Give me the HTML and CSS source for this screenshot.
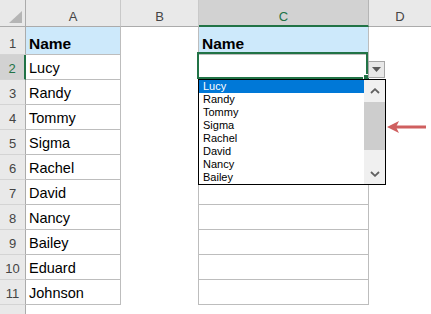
FILE: index.html
```html
<!DOCTYPE html>
<html lang="en">
<head>
    <meta charset="UTF-8">
    <title>Name list - data validation</title>
    <link rel="stylesheet" href="styles.css">
</head>
<body>
    <div class="sheet">
        <!-- column headers -->
        <div class="corner"><span class="corner-tri"></span></div>
        <div class="colhead">A</div>
        <div class="colhead">B</div>
        <div class="colhead sel">C</div>
        <div class="colhead last">D</div>

        <div class="rowhead">1</div>
        <div class="cell a head">Name</div>
        <div class="cell b"></div>
        <div class="cell c head">Name</div>
        <div class="cell d"></div>

        <div class="rowhead sel">2</div>
        <div class="cell a">Lucy</div>
        <div class="cell b"></div>
        <div class="cell c active">
            <div class="selection"><span class="handle"></span></div>
            <div class="drop-btn">
                <svg width="9" height="5" viewBox="0 0 9 5"><path d="M0 0 H9 L4.5 5 Z" fill="#5a5a5a"/></svg>
            </div>
            <div class="listbox">
                <ul class="items">
                    <li class="picked">Lucy</li>
                    <li>Randy</li>
                    <li>Tommy</li>
                    <li>Sigma</li>
                    <li>Rachel</li>
                    <li>David</li>
                    <li>Nancy</li>
                    <li>Bailey</li>
                </ul>
                <div class="scrollbar">
                    <div class="sb-btn up">
                        <svg width="10" height="6" viewBox="0 0 10 6"><polyline points="1,5 5,1.2 9,5" fill="none" stroke="#606060" stroke-width="1.8"/></svg>
                    </div>
                    <div class="sb-thumb"></div>
                    <div class="sb-track"></div>
                    <div class="sb-btn down">
                        <svg width="10" height="6" viewBox="0 0 10 6"><polyline points="1,1 5,4.8 9,1" fill="none" stroke="#606060" stroke-width="1.8"/></svg>
                    </div>
                </div>
            </div>
        </div>
        <div class="cell d"></div>

        <div class="rowhead">3</div>
        <div class="cell a">Randy</div>
        <div class="cell b"></div>
        <div class="cell c"></div>
        <div class="cell d"></div>

        <div class="rowhead">4</div>
        <div class="cell a">Tommy</div>
        <div class="cell b"></div>
        <div class="cell c"></div>
        <div class="cell d"></div>

        <div class="rowhead">5</div>
        <div class="cell a">Sigma</div>
        <div class="cell b"></div>
        <div class="cell c"></div>
        <div class="cell d"></div>

        <div class="rowhead">6</div>
        <div class="cell a">Rachel</div>
        <div class="cell b"></div>
        <div class="cell c"></div>
        <div class="cell d"></div>

        <div class="rowhead">7</div>
        <div class="cell a">David</div>
        <div class="cell b"></div>
        <div class="cell c"></div>
        <div class="cell d"></div>

        <div class="rowhead">8</div>
        <div class="cell a">Nancy</div>
        <div class="cell b"></div>
        <div class="cell c"></div>
        <div class="cell d"></div>

        <div class="rowhead">9</div>
        <div class="cell a">Bailey</div>
        <div class="cell b"></div>
        <div class="cell c"></div>
        <div class="cell d"></div>

        <div class="rowhead">10</div>
        <div class="cell a">Eduard</div>
        <div class="cell b"></div>
        <div class="cell c"></div>
        <div class="cell d"></div>

        <div class="rowhead">11</div>
        <div class="cell a">Johnson</div>
        <div class="cell b"></div>
        <div class="cell c"></div>
        <div class="cell d"></div>

        <div class="rowhead next">12</div>
        <div class="cell empty"></div>
        <div class="cell empty"></div>
        <div class="cell empty"></div>
        <div class="cell empty"></div>

        <!-- pointer arrow -->
        <svg class="pointer" width="44" height="16" viewBox="0 0 44 16">
            <path d="M1 8 L13 2 L10 8 L13 14 Z" fill="#cf5f5f"/>
            <rect x="9" y="6.5" width="31" height="3" fill="#cf5f5f"/>
        </svg>
    </div>
</body>
</html>
```

FILE: styles.css
```css
html, body {
    margin: 0;
    padding: 0;
    background: #fff;
    overflow: hidden;
}
.sheet {
    position: relative;
    display: grid;
    grid-template-columns: 26px 95px 78px 170px 1fr;
    grid-template-rows: 27px 28px repeat(10, 25px) 25px;
    width: 431px;
    height: 314px;
    overflow: hidden;
    font-family: "Liberation Sans", Arial, sans-serif;
}
.sheet > div {
    box-sizing: border-box;
}

/* headers */
.corner {
    position: relative;
    background: #e9e9e9;
    border-right: 1px solid #ababab;
    border-bottom: 1px solid #ababab;
}
.corner-tri {
    position: absolute;
    right: 3px;
    bottom: 3px;
    width: 0;
    height: 0;
    border-left: 13px solid transparent;
    border-bottom: 12px solid #b5b5b5;
}
.colhead {
    background: #e9e9e9;
    border-right: 1px solid #c9c9c9;
    border-bottom: 1px solid #ababab;
    color: #444;
    font-size: 13px;
    text-align: center;
    line-height: 13px;
    padding-top: 10px;
}
.colhead.sel {
    background: #d2d2d2;
    color: #217346;
    border-bottom: 2px solid #217346;
    border-right-color: #b5b5b5;
}
.colhead.last {
    border-right: none;
}
.rowhead {
    display: flex;
    align-items: flex-end;
    justify-content: center;
    background: #e9e9e9;
    border-right: 1px solid #ababab;
    border-bottom: 1px solid #d4d4d4;
    color: #444;
    font-size: 13px;
    line-height: 13px;
    padding-bottom: 4px;
}
.rowhead.sel {
    background: #d2d2d2;
    color: #217346;
    border-right: 2px solid #217346;
}
.rowhead.next {
    align-items: flex-start;
    padding-top: 7px;
}

/* cells */
.cell {
    display: flex;
    align-items: flex-end;
    padding: 0 3px 3px;
    font-size: 14.5px;
    line-height: 15px;
    color: #000;
}
.cell.a, .cell.c {
    border-right: 1px solid #bdbdbd;
    border-bottom: 1px solid #bdbdbd;
}
.cell.b {
    border-right: 1px solid #bdbdbd;
}
.cell.head {
    background: #cde9fb;
    font-weight: bold;
    font-size: 15.5px;
}

/* active cell with its validation list */
.cell.active {
    position: relative;
    overflow: visible;
    z-index: 2;
}
.selection {
    position: absolute;
    top: -3px;
    left: -2px;
    right: 0;
    bottom: 0;
    border: 2px solid #217346;
}
.handle {
    position: absolute;
    right: -4px;
    bottom: -4px;
    width: 5px;
    height: 5px;
    background: #217346;
    border: 1px solid #fff;
}
.drop-btn {
    position: absolute;
    left: 100%;
    top: 6px;
    width: 17px;
    height: 17px;
    box-sizing: border-box;
    background: #e8e8e8;
    border: 1px solid #a6a6a6;
    display: flex;
    align-items: center;
    justify-content: center;
}
.listbox {
    position: absolute;
    left: -1px;
    top: 24px;
    width: 188px;
    height: 106px;
    box-sizing: border-box;
    border: 1px solid #000;
    background: #fff;
    display: flex;
    z-index: 3;
}
.items {
    list-style: none;
    margin: 0;
    padding: 0;
    flex: 1;
    font-size: 11px;
    line-height: 13px;
}
.items li {
    padding-left: 4px;
    height: 13px;
    color: #000;
}
.items li.picked {
    background: #0078d7;
    color: #fff;
}
.scrollbar {
    width: 21px;
    display: flex;
    flex-direction: column;
    background: #f0f0f0;
}
.sb-btn {
    display: flex;
    align-items: center;
    justify-content: center;
}
.sb-btn.up {
    height: 22px;
}
.sb-thumb {
    height: 48px;
    background: #cdcdcd;
}
.sb-track {
    height: 14px;
}
.sb-btn.down {
    flex: 1;
}

.pointer {
    position: absolute;
    left: 386px;
    top: 119px;
}
```
